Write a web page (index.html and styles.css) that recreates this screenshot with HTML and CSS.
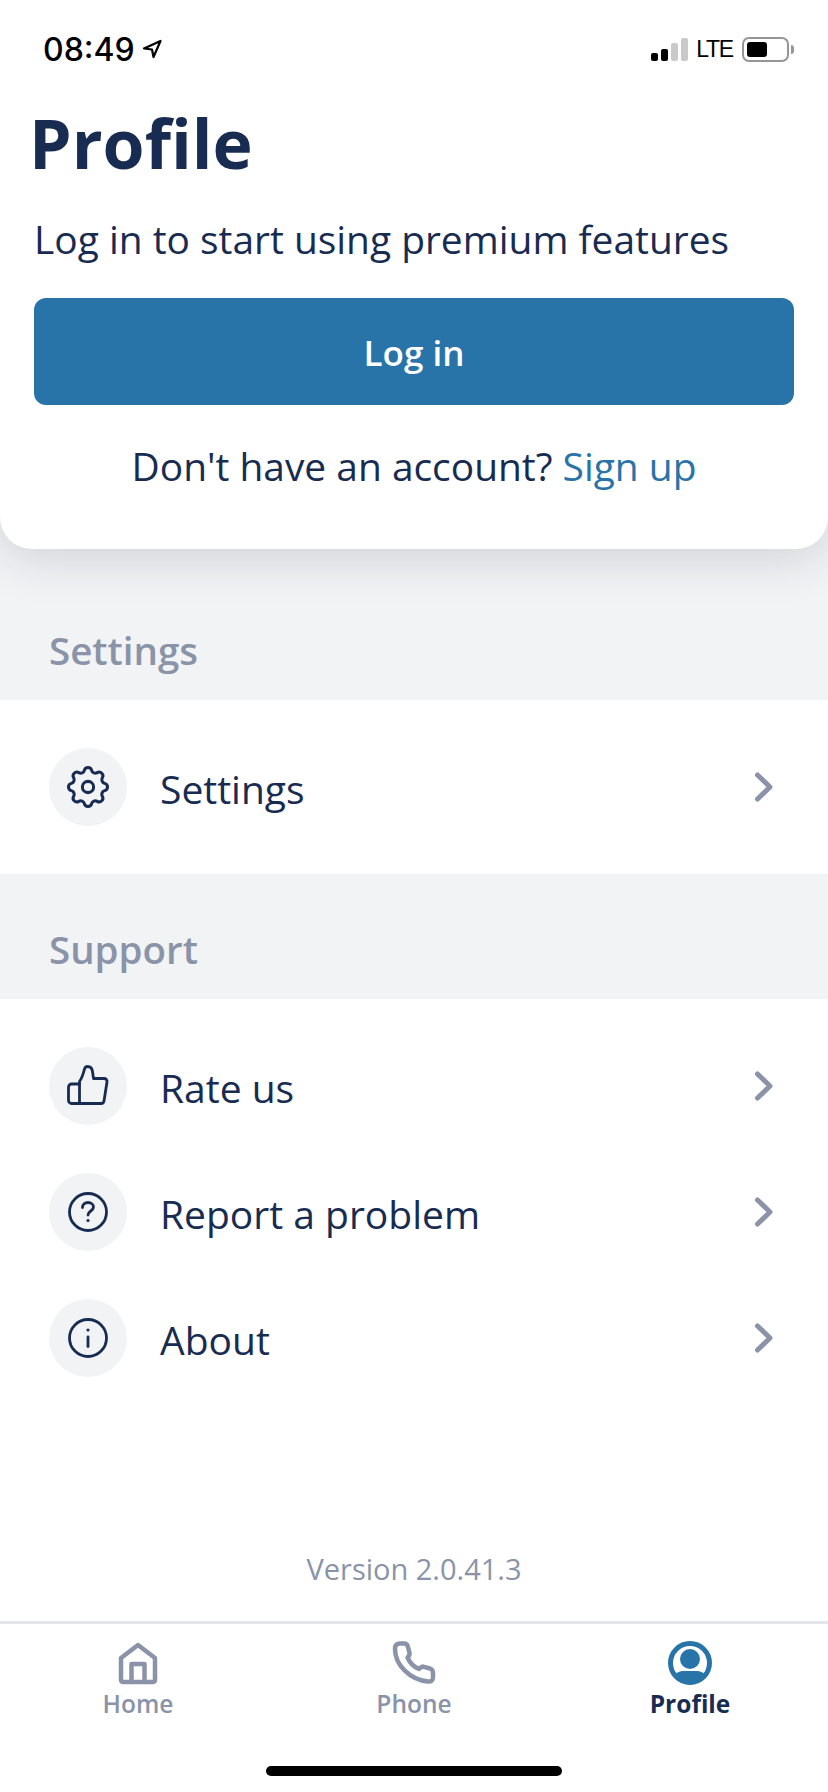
FILE: index.html
```html
<!DOCTYPE html>
<html lang="en">
<head>
  <meta charset="UTF-8">
  <meta name="viewport" content="width=device-width, initial-scale=1.0">
  <title>Profile</title>
  <link rel="stylesheet" href="styles.css">
</head>
<body>
  <div class="app">
    <header class="card">
      <div class="status">
        <div class="status-left">
          <span class="time">08:49</span>
          <svg class="arrow" viewBox="0 0 20 20"><path d="M2 9.5 18.5 2 11.5 18 10 10.5Z"/></svg>
        </div>
        <div class="status-right">
          <div class="signal">
            <i class="on s1"></i><i class="on s2"></i><i class="s3"></i><i class="s4"></i>
          </div>
          <span class="lte">LTE</span>
          <div class="battery"><div class="charge"></div></div>
          <div class="nub"></div>
        </div>
      </div>
      <h1>Profile</h1>
      <p class="lead">Log in to start using premium features</p>
      <button type="button" class="login">Log in</button>
      <p class="signup">Don't have an account? <a href="#">Sign up</a></p>
    </header>

    <div class="section-title first">Settings</div>
    <section class="list">
      <div class="row">
        <div class="badge">
          <svg class="icon gear" width="52" height="52" viewBox="0 0 24 24"><path d="M10.325 4.317c.426-1.756 2.924-1.756 3.35 0a1.724 1.724 0 002.573 1.066c1.543-.94 3.31.826 2.37 2.37a1.724 1.724 0 001.065 2.572c1.756.426 1.756 2.924 0 3.35a1.724 1.724 0 00-1.066 2.573c.94 1.543-.826 3.31-2.37 2.37a1.724 1.724 0 00-2.572 1.065c-.426 1.756-2.924 1.756-3.35 0a1.724 1.724 0 00-2.573-1.066c-1.543.94-3.31-.826-2.37-2.37a1.724 1.724 0 00-1.065-2.572c-1.756-.426-1.756-2.924 0-3.35a1.724 1.724 0 001.066-2.573c-.94-1.543.826-3.31 2.37-2.37.996.608 2.296.07 2.572-1.065z"/><circle cx="12" cy="12" r="2.6"/></svg>
        </div>
        <span class="label">Settings</span>
        <svg class="chevron" viewBox="0 0 20 30"><path d="M3.500 3 16 15 3.500 27"/></svg>
      </div>
    </section>

    <div class="section-title">Support</div>
    <section class="list grow">
      <div class="row">
        <div class="badge">
          <svg class="icon" width="42" height="42" viewBox="0 0 42 42"><path d="M12.500 38.500H34a3 3 0 0 0 3-2.500l3-19c.3-2-1-3.500-3-3.500H26.500l-1-7c-.5-4-3-5-5-5-1.500 0-2.500 1-3 2.500-1 4-2.500 9-5 12.500v22Z"/><path d="M12.500 19H4.500a3 3 0 0 0-3 3v13.500a3 3 0 0 0 3 3h8"/></svg>
        </div>
        <span class="label">Rate us</span>
        <svg class="chevron" viewBox="0 0 20 30"><path d="M3.500 3 16 15 3.500 27"/></svg>
      </div>
      <div class="row">
        <div class="badge">
          <svg class="icon" width="42" height="42" viewBox="0 0 42 42"><circle cx="21" cy="21" r="18.500"/><path d="M15.500 16.500c0-3 2.500-5 5.500-5s5.500 2 5.500 4.500c0 4-5.500 4-5.500 8"/><circle class="dot" cx="21" cy="29.500" r="1.600"/></svg>
        </div>
        <span class="label">Report a problem</span>
        <svg class="chevron" viewBox="0 0 20 30"><path d="M3.500 3 16 15 3.500 27"/></svg>
      </div>
      <div class="row">
        <div class="badge">
          <svg class="icon" width="42" height="42" viewBox="0 0 42 42"><circle cx="21" cy="21" r="18.500"/><path d="M21 20v9.500"/><circle class="dot" cx="21" cy="13" r="1.600"/></svg>
        </div>
        <span class="label">About</span>
        <svg class="chevron" viewBox="0 0 20 30"><path d="M3.500 3 16 15 3.500 27"/></svg>
      </div>
      <div class="version">Version 2.0.41.3</div>
    </section>

    <nav class="tabs">
      <a class="tab" href="#">
        <svg class="tab-icon" width="44" height="44" viewBox="0 0 44 44"><path d="M5 17 22 4 39 17V39a2 2 0 0 1-2 2H7a2 2 0 0 1-2-2Z"/><path d="M15.500 41V23H28.500V41"/></svg>
        <span>Home</span>
      </a>
      <a class="tab" href="#">
        <svg class="tab-icon" width="44" height="44" viewBox="0 0 44 44"><path d="M3 8C3 4 5 2.500 8 2.500h4c2 0 3.500 1 4 3.500l1.500 6c.5 2-.5 3-2 4.500 2 4.500 6.500 9.500 11.500 11.500 1.500-1.500 2.500-3 5-2.200l6 1.700c2 .7 3 2 3 4.500v4.500c0 3-2 4.500-5 4C18 39 3 24 3 8Z"/></svg>
        <span>Phone</span>
      </a>
      <a class="tab active" href="#">
        <svg width="44" height="44" viewBox="0 0 44 44"><circle class="ring" cx="22" cy="22" r="19.500"/><circle class="fill" cx="22" cy="18" r="10"/><path class="fill" d="M7 34C9 31 12 30 15 30H29C32 30 35 31 37 34A20 20 0 0 1 7 34Z"/></svg>
        <span>Profile</span>
      </a>
    </nav>
    <div class="home-bar"><div class="indicator"></div></div>
  </div>
</body>
</html>
```
FILE: styles.css
```css
* {
  box-sizing: border-box;
}
body {
  margin: 0;
  background: #fff;
  color: #182c52;
  font-family: "Open Sans", sans-serif;
}
.app {
  display: flex;
  flex-direction: column;
  height: 1792px;
  background: #f2f3f5;
  overflow: hidden;
}

/* top card */
.card {
  background: #fff;
  height: 549px;
  padding: 0 34px;
  border-radius: 0 0 32px 32px;
  box-shadow: 0 8px 50px rgba(20, 30, 50, 0.16);
  position: relative;
}
.status {
  height: 88px;
  margin: 0 -34px;
  padding: 10px 34px 0 43px;
  display: flex;
  align-items: center;
  justify-content: space-between;
  color: #000;
}
.status-left {
  display: flex;
  align-items: center;
  gap: 7px;
}
.time {
  font-family: Inter, sans-serif;
  font-weight: 500;
  font-size: 32px;
}
.arrow {
  width: 20px;
  height: 20px;
  fill: none;
  stroke: #000;
  stroke-width: 2.2;
  stroke-linejoin: round;
}
.status-right {
  display: flex;
  align-items: center;
}
.signal {
  display: flex;
  align-items: flex-end;
  gap: 3px;
  height: 23px;
}
.signal i {
  display: block;
  width: 7px;
  background: #c9c9c9;
  border-radius: 2px;
}
.signal .on {
  background: #000;
}
.s1 { height: 8px; }
.s2 { height: 12px; }
.s3 { height: 18px; }
.s4 { height: 23px; }
.lte {
  font-family: "Liberation Sans", sans-serif;
  font-size: 23px;
  letter-spacing: -1.2px;
  margin: 0 9px 0 8px;
}
.battery {
  width: 47px;
  height: 25px;
  border: 2px solid #969696;
  border-radius: 7px;
  padding: 3px;
}
.charge {
  width: 20px;
  height: 15px;
  background: #000;
  border-radius: 3px;
}
.nub {
  width: 3px;
  height: 9px;
  margin-left: 2px;
  background: #969696;
  border-radius: 0 3px 3px 0;
}
h1 {
  margin: 15px 0 0 -5px;
  font-size: 68px;
  line-height: 80px;
  font-weight: 700;
}
.lead {
  margin: 28px 0 0;
  font-size: 38.900px;
  line-height: 56px;
}
.login {
  display: block;
  width: 100%;
  height: 107px;
  margin-top: 31px;
  padding-top: 3px;
  border: none;
  border-radius: 12px;
  background: #2874a8;
  color: #fff;
  font-family: inherit;
  font-size: 35px;
  font-weight: 600;
}
.signup {
  margin: 33px 0 0;
  font-size: 38.900px;
  line-height: 56px;
  text-align: center;
}
.signup a {
  color: #2874a8;
  text-decoration: none;
}

/* lists */
.section-title {
  height: 125px;
  padding: 50px 0 0 49px;
  font-size: 38.500px;
  line-height: 50px;
  font-weight: 600;
  color: #8a93a8;
}
.section-title.first {
  height: 151px;
  padding-top: 76px;
}
.list {
  background: #fff;
  padding: 48px 0;
  display: flex;
  flex-direction: column;
  gap: 48px;
}
.list.grow {
  flex: 1;
  padding-bottom: 0;
}
.row {
  display: flex;
  align-items: center;
  padding: 0 54px 0 49px;
}
.badge {
  width: 78px;
  height: 78px;
  border-radius: 50%;
  background: #f2f3f5;
  display: flex;
  align-items: center;
  justify-content: center;
}
.icon {
  fill: none;
  stroke: #182c52;
  stroke-width: 2.8;
  stroke-linecap: round;
  stroke-linejoin: round;
}
.icon.gear {
  stroke-width: 1.4;
}
.icon .dot {
  fill: #182c52;
  stroke: none;
}
.label {
  flex: 1;
  margin-left: 33px;
  padding-top: 3px;
  font-size: 39px;
}
.chevron {
  width: 20px;
  height: 30px;
  fill: none;
  stroke: #8a93a8;
  stroke-width: 5;
  stroke-linecap: round;
  stroke-linejoin: round;
}
.version {
  margin-top: auto;
  padding-bottom: 31px;
  text-align: center;
  font-size: 29px;
  line-height: 42px;
  color: #8a93a8;
}

/* bottom tabs */
.tabs {
  display: grid;
  grid-template-columns: repeat(3, 1fr);
  background: #fff;
  border-top: 3px solid #e4e5ea;
  padding-top: 17px;
}
.tab {
  display: flex;
  flex-direction: column;
  align-items: center;
  color: #8a93a8;
  font-size: 24.500px;
  line-height: 38px;
  font-weight: 600;
  text-decoration: none;
}
.tab-icon {
  fill: none;
  stroke: #8a93a8;
  stroke-width: 4.500;
  stroke-linecap: round;
  stroke-linejoin: round;
}
.tab.active {
  color: #182c52;
  font-weight: 700;
}
.ring {
  fill: none;
  stroke: #2874a8;
  stroke-width: 5;
}
.fill {
  fill: #2874a8;
}
.home-bar {
  height: 69px;
  background: #fff;
  padding-top: 43px;
}
.indicator {
  width: 296px;
  height: 10px;
  margin: 0 auto;
  background: #000;
  border-radius: 5px;
}
```
